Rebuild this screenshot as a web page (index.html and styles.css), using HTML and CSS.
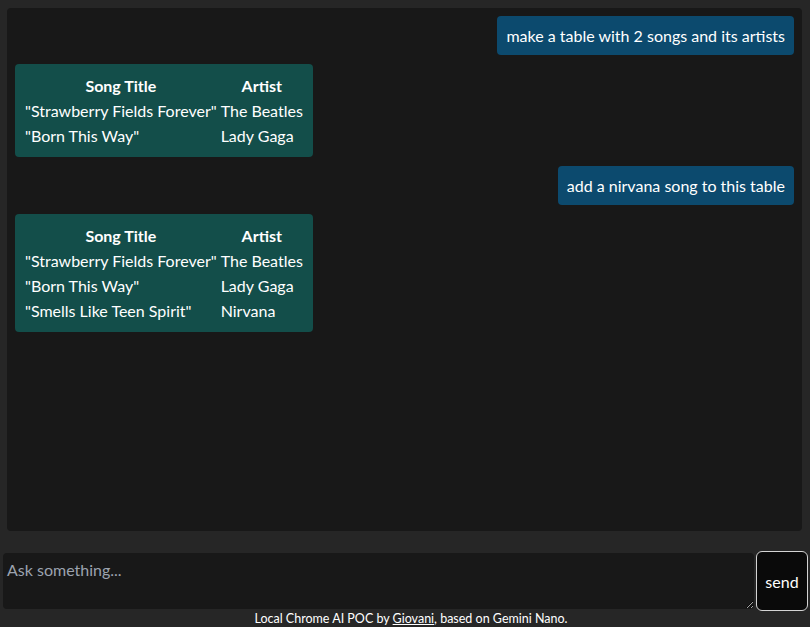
FILE: index.html
```html
<!DOCTYPE html>
<html lang="en">

<head>
  <meta charset="UTF-8">
  <meta name="viewport" content="width=device-width, initial-scale=1.0" />
  <title>Local Chrome AI</title>
  <link rel="stylesheet" href="styles.css">
</head>

<body>
  <div class="page">
    <div class="chat" id="chat">
      <div class="msg user">make a table with 2 songs and its artists</div>
      <div class="msg bot">
        <table>
          <thead>
            <tr><th>Song Title</th><th>Artist</th></tr>
          </thead>
          <tbody>
            <tr><td>"Strawberry Fields Forever"</td><td>The Beatles</td></tr>
            <tr><td>"Born This Way"</td><td>Lady Gaga</td></tr>
          </tbody>
        </table>
      </div>
      <div class="msg user">add a nirvana song to this table</div>
      <div class="msg bot">
        <table>
          <thead>
            <tr><th>Song Title</th><th>Artist</th></tr>
          </thead>
          <tbody>
            <tr><td>"Strawberry Fields Forever"</td><td>The Beatles</td></tr>
            <tr><td>"Born This Way"</td><td>Lady Gaga</td></tr>
            <tr><td>"Smells Like Teen Spirit"</td><td>Nirvana</td></tr>
          </tbody>
        </table>
      </div>
    </div>

    <form class="ask" onsubmit="return false">
      <textarea class="prompt" placeholder="Ask something..."></textarea>
      <button class="send" type="submit">send</button>
    </form>

    <div class="footer">Local Chrome AI POC by <a href="#">Giovani</a>, based on Gemini Nano.</div>
  </div>
</body>

</html>
```

FILE: styles.css
```css
* {
  box-sizing: border-box;
  margin: 0;
  padding: 0;
}

html,
body {
  height: 100%;
}

body {
  font-family: Lato, 'Noto Sans', sans-serif;
  font-size: 16px;
  color: #fff;
  background: #262626;
}

.page {
  display: flex;
  flex-direction: column;
  height: 100%;
}

.chat {
  display: flex;
  flex-direction: column;
  align-items: flex-start;
  gap: 9px;
  height: 523px;
  margin: 8px 8px 20px 7px;
  padding: 8px;
  background: #181818;
  border-radius: 4px;
  overflow-y: auto;
}

.msg {
  padding: 8px 9px;
  border-radius: 4px;
  line-height: 23px;
}

.msg.user {
  align-self: flex-end;
  background: #0c4a6e;
}

.msg.bot {
  padding: 8px 7px;
  background: #134e4a;
}

table {
  border-spacing: 2px;
}

th,
td {
  padding: 1px;
  line-height: 21px;
  white-space: nowrap;
}

th {
  font-weight: bold;
  text-align: center;
}

td {
  text-align: left;
}

.ask {
  display: flex;
  align-items: center;
  gap: 2px;
  padding: 0 2px 0 3px;
}

.prompt {
  flex: 1;
  height: 56px;
  padding: 7px 4px 4px;
  font-family: inherit;
  font-size: 16px;
  color: #fff;
  background: #181818;
  border: none;
  border-radius: 4px;
  resize: vertical;
}

.prompt::placeholder {
  color: #9ca3af;
}

.send {
  width: 52px;
  height: 60px;
  font-family: inherit;
  font-size: 16px;
  color: #fff;
  background: #0a0a0a;
  border: 1px solid #d4d4d4;
  border-radius: 6px;
  cursor: pointer;
}

.footer {
  padding-left: 12px;
  text-align: center;
  font-size: 12.5px;
  line-height: 16px;
}

.footer a {
  color: #fff;
}
```
